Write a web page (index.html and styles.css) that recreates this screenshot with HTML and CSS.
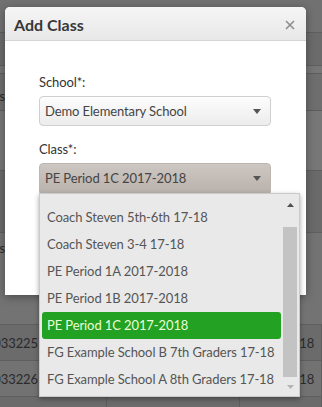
FILE: index.html
```html
<!DOCTYPE html>
<html>
<head>
    <meta charset="UTF-8">
    <meta name="viewport" content="width=device-width, initial-scale=1.0">
    <title>Add Class</title>
    <link rel="stylesheet" href="styles.css">
</head>
<body>
    <div class="backdrop">
        <div class="bg-row bg-a"></div>
        <div class="bg-row bg-b"></div>
        <div class="bg-row bg-c"></div>
        <div class="bg-row bg-d"><span class="bg-cut">Details</span></div>
        <div class="bg-row bg-e"></div>
        <div class="bg-row bg-f"></div>
        <div class="bg-row bg-g"><span class="bg-cut bg-top">Students</span></div>
        <div class="bg-table">
            <div class="bg-tr">
                <div class="bg-td bg-id"><span>1033225</span></div>
                <div class="bg-td">11/2017</div>
                <div class="bg-td">2017-2018</div>
            </div>
            <div class="bg-tr bg-odd">
                <div class="bg-td bg-id"><span>1033226</span></div>
                <div class="bg-td">11/2017</div>
                <div class="bg-td">2017-2018</div>
            </div>
            <div class="bg-tr">
                <div class="bg-td bg-id"><span>10003</span></div>
                <div class="bg-td">11/2017</div>
                <div class="bg-td">2017-2018</div>
            </div>
        </div>
    </div>

    <div class="modal">
        <div class="modal-header">
            <h4 class="modal-title">Add Class</h4>
            <button class="close" type="button">
                <svg width="10" height="10" viewBox="0 0 10 10">
                    <path d="M1 1 L9 9 M9 1 L1 9" stroke="#8d8d8d" stroke-width="1.6" fill="none"/>
                </svg>
            </button>
        </div>
        <div class="modal-body">
            <label>School*:</label>
            <div class="select">
                <span>Demo Elementary School</span>
                <svg width="8" height="5" viewBox="0 0 8 5"><polygon points="0,0 8,0 4,5" fill="#555"/></svg>
            </div>

            <label>Class*:</label>
            <div class="field">
                <div class="select select-open">
                    <span>PE Period 1C 2017-2018</span>
                    <svg width="8" height="5" viewBox="0 0 8 5"><polygon points="0,0 8,0 4,5" fill="#555"/></svg>
                </div>
                <div class="dropdown">
                    <ul class="options">
                        <li>Coach Steven 5th-6th 17-18</li>
                        <li>Coach Steven 3-4 17-18</li>
                        <li>PE Period 1A 2017-2018</li>
                        <li>PE Period 1B 2017-2018</li>
                        <li class="selected">PE Period 1C 2017-2018</li>
                        <li>FG Example School B 7th Graders 17-18</li>
                        <li>FG Example School A 8th Graders 17-18</li>
                    </ul>
                    <div class="scrollbar">
                        <div class="scroll-btn">
                            <svg width="7" height="4" viewBox="0 0 7 4"><polygon points="0,4 7,4 3.5,0" fill="#505050"/></svg>
                        </div>
                        <div class="scroll-thumb"></div>
                        <div class="scroll-btn scroll-down">
                            <svg width="7" height="4" viewBox="0 0 7 4"><polygon points="0,0 7,0 3.5,4" fill="#b4b4b4"/></svg>
                        </div>
                    </div>
                </div>
            </div>
        </div>
    </div>
</body>
</html>
```

FILE: styles.css
```css
:root {
    --text: #333;
    --text-light: #555;
    --line: #5e5e5e;
    --green: #22a122;
}

* {
    margin: 0;
    padding: 0;
    box-sizing: border-box;
}

body {
    font-family: 'Lato', 'Open Sans', sans-serif;
    font-size: 13px;
    letter-spacing: -0.1px;
    color: var(--text);
    width: 322px;
    height: 407px;
    overflow: hidden;
    position: relative;
    background: #707070;
}

/* page behind the modal */
.backdrop {
    color: #2a2a2a;
}

.bg-row {
    display: flex;
    align-items: center;
    border-bottom: 1px solid var(--line);
}

.bg-a { height: 33px; background: #717171; }
.bg-b { height: 33px; background: #6b6b6b; }
.bg-c { height: 8px; background: #767676; }
.bg-d { height: 37px; background: #6e6e6e; align-items: flex-end; }
.bg-e { height: 60px; background: #777; }
.bg-f { height: 62px; background: #6a6a6a; }
.bg-g { height: 92px; background: #737373; align-items: flex-start; }

.bg-cut {
    width: 5px;
    overflow: hidden;
    display: flex;
    justify-content: flex-end;
    white-space: nowrap;
    line-height: 28px;
}

.bg-top {
    line-height: 30px;
}

.bg-tr {
    display: grid;
    grid-template-columns: 107px 133px 82px;
    height: 36px;
    background: #6b6b6b;
    border-bottom: 1px solid var(--line);
}

.bg-odd {
    background: #727272;
}

.bg-td {
    display: flex;
    align-items: center;
    padding-left: 10px;
    border-right: 1px solid var(--line);
    white-space: nowrap;
    overflow: hidden;
}

.bg-id {
    padding-left: 0;
}

.bg-id span {
    width: 38px;
    overflow: hidden;
    display: flex;
    justify-content: flex-end;
}

/* modal */
.modal {
    position: absolute;
    left: 5px;
    top: 7px;
    width: 301px;
    background: white;
    border-radius: 5px 5px 0 0;
    box-shadow: 0 2px 8px rgba(0, 0, 0, 0.35);
}

.modal-header {
    display: flex;
    justify-content: space-between;
    align-items: center;
    padding: 6px 11px 3px 9px;
    background: linear-gradient(#f5f5f5, #e8e8e8);
    border-bottom: 1px solid #d4d4d4;
    border-radius: 5px 5px 0 0;
}

.modal-title {
    font-size: 16px;
    font-weight: 700;
    line-height: 24px;
    letter-spacing: 0;
    color: #383838;
}

.close {
    border: none;
    background: none;
    display: flex;
    cursor: pointer;
}

.modal-body {
    padding: 31px 35px 102px 34px;
}

label {
    display: block;
    line-height: 20px;
    margin-bottom: 4px;
    color: var(--text);
}

.select {
    display: flex;
    justify-content: space-between;
    align-items: center;
    height: 30px;
    padding: 0 9px 0 5px;
    border: 1px solid #cfcfcf;
    border-radius: 4px;
    background: linear-gradient(#fdfdfd, #ececec);
    color: #444;
    margin-bottom: 13px;
}

.field {
    position: relative;
}

.select-open {
    margin-bottom: 0;
    border-color: #bcb5b0;
    border-radius: 4px 4px 0 0;
    background: linear-gradient(#cdc7c3, #bab2ac);
}

/* open list */
.dropdown {
    position: absolute;
    top: 100%;
    left: 0;
    width: 261px;
    height: 204px;
    display: flex;
    background: #e9e9e9;
    border: 1px solid #cacaca;
    box-shadow: 0 2px 5px rgba(0, 0, 0, 0.35);
}

.options {
    flex: 1;
    min-width: 0;
    overflow: hidden;
    list-style: none;
    padding: 10px 2px 0 2px;
}

.options li {
    height: 27px;
    line-height: 27px;
    padding: 0 5px;
    color: var(--text-light);
    white-space: nowrap;
}

.options .selected {
    background: var(--green);
    color: #eaffd8;
    border-radius: 3px;
}

.scrollbar {
    width: 14px;
    flex-shrink: 0;
    margin-right: 2px;
    display: flex;
    flex-direction: column;
}

.scroll-btn {
    height: 22px;
    display: flex;
    justify-content: center;
    align-items: center;
}

.scroll-thumb {
    height: 150px;
    margin-top: 11px;
    background: #c3c3c3;
}

.scroll-down {
    flex: 1;
    height: auto;
}
```
